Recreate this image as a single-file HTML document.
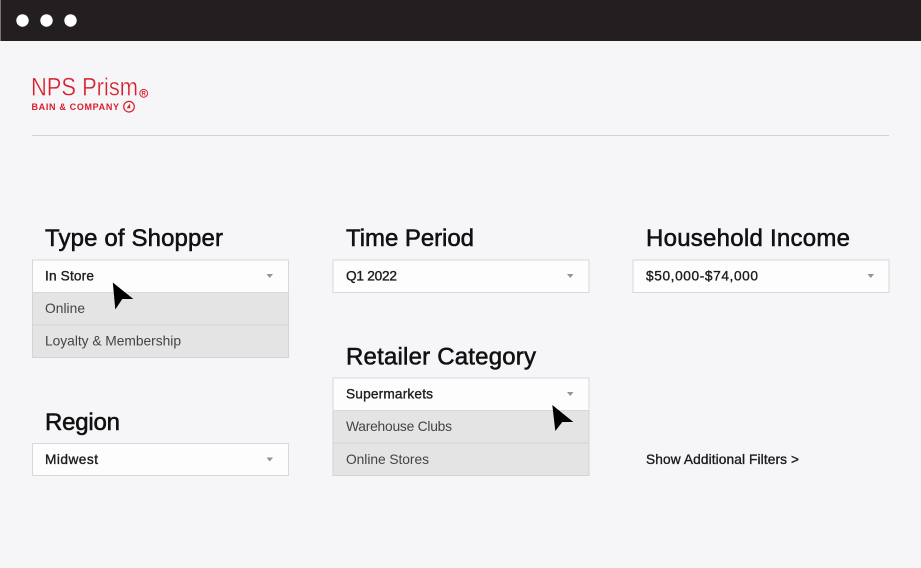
<!DOCTYPE html>
<html><head><meta charset="utf-8"><style>
html,body{margin:0;padding:0;background:#f6f5f8}
svg{display:block}
text{font-family:"Liberation Sans",sans-serif}
.h{font-size:24px;fill:#111;stroke:#111;stroke-width:.55px}
.s{font-size:13.7px;fill:#1c1c1c;stroke:#1c1c1c;stroke-width:.35px}
.o{font-size:13.8px;fill:#444}
.w{fill:#fdfdfd;stroke:#d8d8da;stroke-width:1}
.g{fill:#e4e4e4;stroke:#d4d4d4;stroke-width:1}
.a{fill:#939393}
</style></head><body>
<svg width="921" height="568" viewBox="0 0 921 568" xmlns="http://www.w3.org/2000/svg">
<rect width="921" height="568" fill="#f6f5f8"/>
<rect x="0" y="0" width="921" height="41" fill="#231f20"/>
<rect x="0" y="0" width="1" height="41" fill="#777"/>
<circle cx="22.500" cy="20.500" r="6.200" fill="#fff"/>
<circle cx="46.500" cy="20.500" r="6.200" fill="#fff"/>
<circle cx="70.500" cy="20.500" r="6.200" fill="#fff"/>

<text x="31" y="95.500" font-size="25" fill="#d6202e" stroke="#f6f5f8" stroke-width=".35" textLength="107" lengthAdjust="spacingAndGlyphs">NPS Prism</text>
<circle cx="143.700" cy="93.300" r="3.900" fill="none" stroke="#d6202e" stroke-width="1"/>
<text x="143.700" y="95.500" font-size="6" fill="#d6202e" text-anchor="middle" font-weight="700">R</text>
<text x="31.500" y="110" font-size="9" fill="#d6202e" font-weight="700" textLength="87.500" lengthAdjust="spacing">BAIN &amp; COMPANY</text>
<circle cx="129" cy="106.700" r="5.300" fill="none" stroke="#d6202e" stroke-width="1.200"/>
<path d="M130 103.500 L130.300 108.200 L126.600 108.200 Z" fill="#d6202e"/>
<rect x="32" y="135" width="857" height="1" fill="#d3d3d5"/>

<text class="h" x="45" y="246" textLength="178" lengthAdjust="spacing">Type of Shopper</text>
<text class="h" x="346" y="246" textLength="128" lengthAdjust="spacing">Time Period</text>
<text class="h" x="646" y="246" textLength="204" lengthAdjust="spacing">Household Income</text>
<text class="h" x="346" y="364.500" textLength="190" lengthAdjust="spacing">Retailer Category</text>
<text class="h" x="45" y="430" textLength="75" lengthAdjust="spacing">Region</text>

<rect class="g" x="32.500" y="292.500" width="256" height="32.500"/>
<rect class="g" x="32.500" y="325" width="256" height="32.500"/>
<rect class="w" x="32.500" y="260" width="256" height="32.500"/>
<text class="s" x="45" y="280.500" textLength="49" lengthAdjust="spacing">In Store</text>
<text class="o" x="45" y="313" textLength="40" lengthAdjust="spacing">Online</text>
<text class="o" x="45" y="345.500" textLength="136" lengthAdjust="spacing">Loyalty &amp; Membership</text>
<path class="a" d="M266.500 274 L273 274 L269.750 278 Z"/>

<rect class="w" x="333" y="260" width="256" height="32.500"/>
<text class="s" x="346" y="280.500" textLength="51" lengthAdjust="spacing">Q1 2022</text>
<path class="a" d="M567 274 L573.500 274 L570.250 278 Z"/>

<rect class="w" x="633" y="260" width="256" height="32.500"/>
<text class="s" x="646" y="280.500" textLength="112" lengthAdjust="spacing">$50,000-$74,000</text>
<path class="a" d="M867.500 274 L874 274 L870.750 278 Z"/>

<rect class="g" x="333" y="410.500" width="256" height="32.500"/>
<rect class="g" x="333" y="443" width="256" height="32.500"/>
<rect class="w" x="333" y="378" width="256" height="32.500"/>
<text class="s" x="346" y="398.500" textLength="87" lengthAdjust="spacing">Supermarkets</text>
<text class="o" x="346" y="431" textLength="106" lengthAdjust="spacing">Warehouse Clubs</text>
<text class="o" x="346" y="464" textLength="83" lengthAdjust="spacing">Online Stores</text>
<path class="a" d="M567 392 L573.500 392 L570.250 396 Z"/>

<rect class="w" x="32.500" y="443.500" width="256" height="32"/>
<text class="s" x="45" y="464" textLength="53" lengthAdjust="spacing">Midwest</text>
<path class="a" d="M266.500 457.500 L273 457.500 L269.750 461.500 Z"/>

<text class="s" x="646" y="464" textLength="153" lengthAdjust="spacing">Show Additional Filters &gt;</text>

<path d="M112.800 282.500 L133.300 299 L122.300 299 L115.300 309.500 Z" fill="#000"/>
<path d="M552.300 405 L573.300 422 L562.300 422 L555.300 431 Z" fill="#000"/>
</svg>
</body></html>
